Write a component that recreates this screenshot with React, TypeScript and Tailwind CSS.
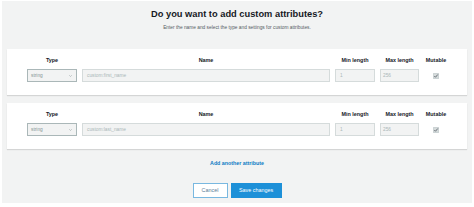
import React from "react";

const font = { fontFamily: '"Liberation Sans", Arial, sans-serif' };

function Row({ name }: { name: string }) {
  return (
    <div className="bg-white shadow-[0_1px_1px_rgba(0,0,0,0.12)] pt-[7px] pb-[13px] pl-[20px]">
      <div className="grid grid-cols-[50px_248px_40px_39px_24px] gap-x-[5px] gap-y-[5px] items-center">
        <div className="text-center text-[5.4px] leading-[8px] font-bold text-[#16191f]">Type</div>
        <div className="text-center text-[5.4px] leading-[8px] font-bold text-[#16191f]">Name</div>
        <div className="text-center text-[5.4px] leading-[8px] font-bold text-[#16191f] whitespace-nowrap">Min length</div>
        <div className="text-center text-[5.4px] leading-[8px] font-bold text-[#16191f] whitespace-nowrap">Max length</div>
        <div className="text-center text-[5.4px] leading-[8px] font-bold text-[#16191f]">Mutable</div>

        <div className="h-[13px] border border-[#aab7b8] bg-[#f2f3f3] flex items-center justify-between pl-[3px] pr-[4px]">
          <span className="text-[4.8px] text-[#879596]">string</span>
          <svg width="3" height="2" viewBox="0 0 6 4">
            <path d="M0.5 0.5 L3 3 L5.5 0.5" stroke="#879596" strokeWidth="1" fill="none" />
          </svg>
        </div>
        <div className="h-[13px] border border-[#d5dbdb] bg-[#f2f3f3] flex items-center pl-[4px]">
          <span className="text-[4.8px] text-[#aab7b8]">{name}</span>
        </div>
        <div className="h-[13px] border border-[#d5dbdb] bg-[#f2f3f3] flex items-center pl-[4px]">
          <span className="text-[4.8px] text-[#aab7b8]">1</span>
        </div>
        <div className="h-[13px] border border-[#d5dbdb] bg-[#f2f3f3] flex items-center pl-[2px]">
          <span className="text-[4.8px] text-[#aab7b8]">256</span>
        </div>
        <div className="flex items-center justify-center">
          <svg width="6" height="6" viewBox="0 0 12 12">
            <rect x="0.5" y="0.5" width="11" height="11" rx="1.5" fill="#d5dbdb" stroke="#aab7b8" />
            <path d="M2.5 6 L5 8.5 L9.5 3" stroke="#545b64" strokeWidth="1.6" fill="none" />
          </svg>
        </div>
      </div>
    </div>
  );
}

export default function App() {
  return (
    <div className="w-[474px] h-[207px] bg-white pl-[2px] pr-[2px] pt-[1px] pb-[4px]" style={font}>
      <div className="h-full bg-[#f2f3f3] flex flex-col px-[5px]">
        <div className="text-center text-[9.3px] leading-[12px] font-bold text-[#16191f] mt-[7px]">
          Do you want to add custom attributes?
        </div>
        <div className="text-center text-[4.8px] leading-[8px] text-[#545b64] mt-[4px]">
          Enter the name and select the type and settings for custom attributes.
        </div>
        <div className="flex flex-col gap-[8px] mt-[17px]">
          <Row name="custom:first_name" />
          <Row name="custom:last_name" />
        </div>
        <div className="text-center mt-[10px] text-[5.3px] leading-[8px] font-bold text-[#0a7bc4]">
          Add another attribute
        </div>
        <div className="flex justify-center gap-[3px] mt-[16px]">
          <div className="w-[35px] h-[15px] border border-[#79b8e0] bg-white flex items-center justify-center text-[5.4px] text-[#5a7d98]">
            Cancel
          </div>
          <div className="w-[51px] h-[15px] bg-[#1d90d8] flex items-center justify-center text-[5.4px] text-white">
            Save changes
          </div>
        </div>
      </div>
    </div>
  );
}
